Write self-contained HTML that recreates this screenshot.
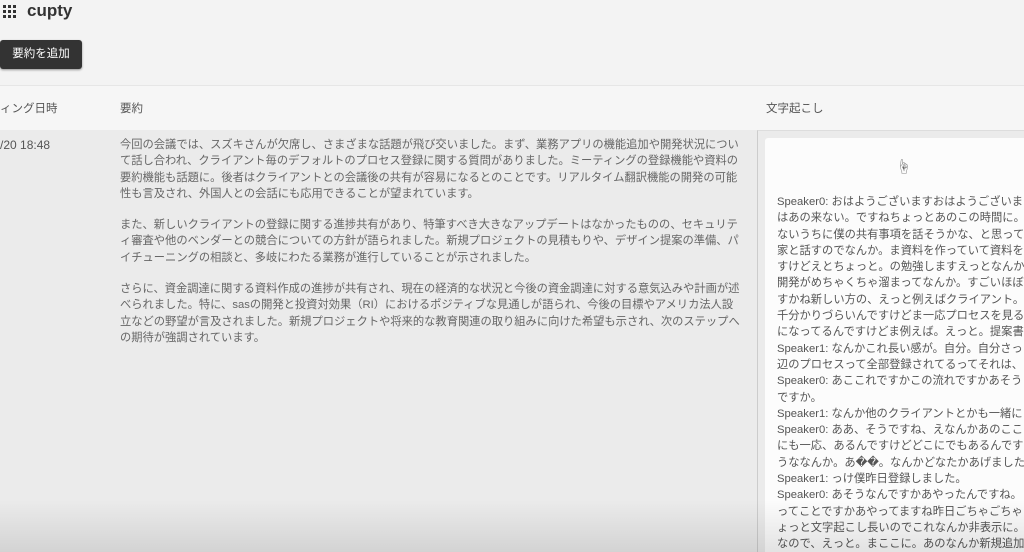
<!DOCTYPE html>
<html><head><meta charset="utf-8"><style>
*{margin:0;padding:0;box-sizing:border-box}
html,body{width:1024px;height:552px;overflow:hidden}
body{background:#f3f3f3;font-family:"Liberation Sans","Noto Sans CJK JP",sans-serif;color:#555;position:relative}
.logo{position:absolute;left:3px;top:5px;width:14px;height:14px}
.logo i{position:absolute;width:3px;height:3px;background:#333}
.title{position:absolute;left:27px;top:1px;font-size:17px;font-weight:bold;color:#333}
.btn{position:absolute;left:0;top:40px;width:82px;height:29px;background:#333;border-radius:3px;color:#fff;font-size:11.5px;line-height:29px;text-align:center;box-shadow:0 1px 2px rgba(0,0,0,.4)}
.head{position:absolute;left:0;top:85px;width:1024px;height:45px;background:#f6f6f6;border-top:1px solid #e6e6e6;font-size:11.5px;color:#555}
.head span{position:absolute;top:14px}
.row{position:absolute;left:0;top:130px;width:1024px;height:422px;background:#ebebeb}
.t{position:absolute;white-space:nowrap;font-size:11.27px;line-height:16.3px;color:#666}
.card{position:absolute;left:757px;top:130px;width:267px;height:422px;border-left:1px solid #ccc;border-top:1px solid #ddd}
.inner{position:absolute;left:765px;top:138px;width:259px;height:414px;background:#fcfcfc;border-radius:3px 0 0 0}
.tr{left:777px;top:194px;color:#555;width:247px;height:358px;overflow:hidden;line-height:16.3px}
.shade{position:absolute;left:0;top:500px;width:1024px;height:52px;background:linear-gradient(rgba(0,0,0,0),rgba(0,0,0,.1))}
</style></head><body>
<div class="logo"><i style="left:0;top:0"></i><i style="left:5px;top:0"></i><i style="left:10px;top:0"></i><i style="left:0;top:5px"></i><i style="left:5px;top:5px"></i><i style="left:10px;top:5px"></i><i style="left:0;top:10px"></i><i style="left:5px;top:10px"></i><i style="left:10px;top:10px"></i></div>
<div class="title">cupty</div>
<div class="btn">要約を追加</div>
<div class="head"><span style="left:0">ィング日時</span><span style="left:120px">要約</span><span style="left:766px">文字起こし</span></div>
<div class="row"></div>
<div class="t" style="left:0;top:137px;font-size:12px;color:#555">/20 18:48</div>
<div class="t" style="left:120px;top:137px">今回の会議では、スズキさんが欠席し、さまざまな話題が飛び交いました。まず、業務アプリの機能追加や開発状況につい<br>て話し合われ、クライアント毎のデフォルトのプロセス登録に関する質問がありました。ミーティングの登録機能や資料の<br>要約機能も話題に。後者はクライアントとの会議後の共有が容易になるとのことです。リアルタイム翻訳機能の開発の可能<br>性も言及され、外国人との会話にも応用できることが望まれています。</div>
<div class="t" style="left:120px;top:217px">また、新しいクライアントの登録に関する進捗共有があり、特筆すべき大きなアップデートはなかったものの、セキュリテ<br>ィ審査や他のベンダーとの競合についての方針が語られました。新規プロジェクトの見積もりや、デザイン提案の準備、パ<br>イチューニングの相談と、多岐にわたる業務が進行していることが示されました。</div>
<div class="t" style="left:120px;top:281px">さらに、資金調達に関する資料作成の進捗が共有され、現在の経済的な状況と今後の資金調達に対する意気込みや計画が述<br>べられました。特に、sasの開発と投資対効果（RI）におけるポジティブな見通しが語られ、今後の目標やアメリカ法人設<br>立などの野望が言及されました。新規プロジェクトや将来的な教育関連の取り組みに向けた希望も示され、次のステップへ<br>の期待が強調されています。</div>
<div class="card"></div>
<div class="inner"></div>
<div style="position:absolute;left:896px;top:156px;font-size:15px;color:#666">☝</div>
<div class="t tr">Speaker0: おはようございますおはようございます<br>はあの来ない。ですねちょっとあのこの時間に。<br>ないうちに僕の共有事項を話そうかな、と思って<br>家と話すのでなんか。ま資料を作っていて資料を<br>すけどえとちょっと。の勉強しますえっとなんか<br>開発がめちゃくちゃ溜まってなんか。すごいほぼ<br>すかね新しい方の、えっと例えばクライアント。<br>千分かりづらいんですけどま一応プロセスを見る<br>になってるんですけどま例えば。えっと。提案書<br>Speaker1: なんかこれ長い感が。自分。自分さっ<br>辺のプロセスって全部登録されてるってそれは、<br>Speaker0: あここれですかこの流れですかあそう<br>ですか。<br>Speaker1: なんか他のクライアントとかも一緒に<br>Speaker0: ああ、そうですね、えなんかあのここ<br>にも一応、あるんですけどどこにでもあるんです<br>うななんか。あ��。なんかどなたかあげました<br>Speaker1: っけ僕昨日登録しました。<br>Speaker0: あそうなんですかあやったんですね。<br>ってことですかあやってますね昨日ごちゃごちゃ<br>ょっと文字起こし長いのでこれなんか非表示に。<br>なので、えっと。まここに。あのなんか新規追加</div>
<div class="shade"></div>
</body></html>
